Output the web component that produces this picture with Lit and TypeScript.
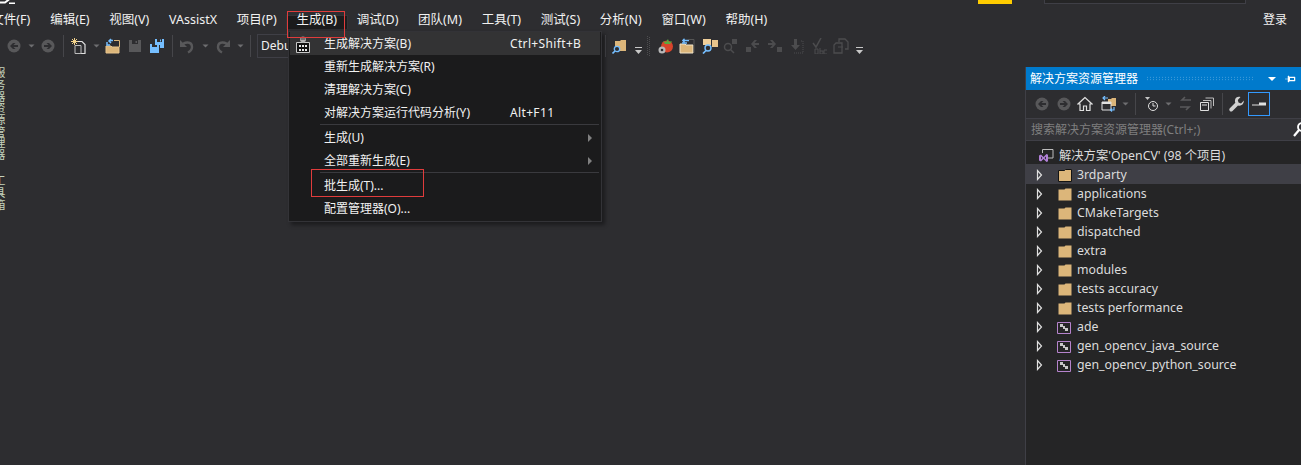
import { LitElement, html, css, svg } from "lit";
import { customElement } from "lit/decorators.js";

const D = "#58585a";
const TAN = "#dcb67a";
const BL = "#75beff";
const W = "#e0e0e0";
const ic = (body: unknown, w = 16, h = 16) =>
  html`<svg width=${w} height=${h} viewBox="0 0 ${w} ${h}">${body}</svg>`;

const back = ic(svg`<circle cx="8" cy="8" r="6.5" fill=${D}/><path d="M12 7H7.500l2-2H7L4 8l3 3h2.500l-2-2H12z" fill="#2d2d30"/>`);
const fwd = ic(svg`<circle cx="8" cy="8" r="6.500" fill=${D}/><path d="M4 7h4.500l-2-2H9l3 3-3 3H6.500l2-2H4z" fill="#2d2d30"/>`);
const dd = ic(svg`<path d="M1.500 2.500h6l-3 3z" fill="#6e6e70"/>`, 9, 8);
const ddLine = html`<span class="low">${ic(svg`<path d="M1 1h7v1H1z" fill="#c8c8c8"/><path d="M1 4h7L4.500 8z" fill="#c8c8c8"/>`, 9, 9)}</span>`;
const newProj = ic(svg`<path d="M7 3.500h4l3 3v9H6" fill="none" stroke=${W} stroke-width="1.200"/><path d="M4 7.500h6v8H4z" fill="none" stroke="#bdbdbd" stroke-width="1"/><path d="M3.500 0v7M0 3.500h7M1 1l5 5M6 1L1 6" stroke="#f2d28b" stroke-width="1"/>`);
const folderOpen = ic(svg`<path d="M1 8h5l1 1h7v6H1z" fill=${TAN} stroke="#e8c48c" stroke-width="1"/><path d="M8 2.500H4.500M6 1 4 3l2 2M2 4v3h3" fill="none" stroke=${BL} stroke-width="1.500"/><path d="M9 2.500h5.500V9" fill="none" stroke=${TAN} stroke-width="1"/>`);
const save = ic(svg`<path d="M2 2h12v12H2z" fill=${D}/><path d="M5 2h6v4H5z" fill="#2d2d30"/><path d="M8.500 3H10v2H8.500z" fill=${D}/>`);
const saveAll = ic(svg`<path d="M1 6h9v9H1z" fill=${BL}/><path d="M3 6h5v3H3z" fill="#2d2d30"/><path d="M6 7V1h9v9h-4V7z" fill=${BL}/><path d="M8 1h5v3H8z" fill="#2d2d30"/><path d="M11 1.500h1v2h-1z" fill=${BL}/>`, 17, 16);
const undo = ic(svg`<path d="M3 7.500C5 3.500 13 3 13 9c0 3-2 4.500-4 5.500" fill="none" stroke=${D} stroke-width="2.400"/><path d="M1 2v7h7z" fill=${D}/>`);
const redo = ic(svg`<path d="M13 7.500C11 3.500 3 3 3 9c0 3 2 4.500 4 5.500" fill="none" stroke=${D} stroke-width="2.400"/><path d="M15 2v7H8z" fill=${D}/>`);

const folderFind = ic(svg`<path d="M3 3h5l1-1h5v11H3z" fill=${TAN}/><circle cx="5" cy="11" r="2.700" fill="#2d2d30" stroke=${BL} stroke-width="1.300"/><path d="M3 13 .500 15.500" stroke=${BL} stroke-width="1.600"/>`);
const tomato = ic(svg`<circle cx="10" cy="8.500" r="6" fill="#d9442b"/><path d="M6 3l3 1 2-3 1 3 3-1-2 3H8z" fill="#5ba83f"/><circle cx="5" cy="12" r="3.500" fill="#b8b8b8"/><circle cx="5" cy="12" r="1.300" fill="#2d2d30"/>`);
const folderRefresh = ic(svg`<path d="M1 6h5l1 1h7v8H1z" fill=${TAN} stroke="#f1e4c9" stroke-width="1"/><path d="M10 2.500H4M5.500 .8 3.800 2.500l1.700 1.700M3 5h5" fill="none" stroke=${BL} stroke-width="1.300"/><path d="M9 1.500h6v13" fill="none" stroke="#555" stroke-width="1"/>`);
const twoFind = ic(svg`<path d="M1 1h8v6H1z" fill="#f0cf9a"/><path d="M10 2h6v7h-6z" fill="#e8c48c"/><circle cx="6" cy="10" r="3" fill="#2d2d30" stroke=${BL} stroke-width="1.400"/><path d="M4 12.500 1 15.500" stroke=${BL} stroke-width="1.700"/>`);
const findDim = ic(svg`<circle cx="6" cy="9" r="3.500" fill="none" stroke="#4c4c4e" stroke-width="1.500"/><path d="M8.500 11.500 12 15" stroke="#4c4c4e" stroke-width="1.500"/><path d="M10 1h5v5h-5z" fill="#4c4c4e"/>`);
const prevDim = ic(svg`<path d="M1 9h5v5H1z" fill="#4c4c4e"/><path d="M14 5H9.500L12 2H9.500L6 6l3.500 4H12L9.500 7H14z" fill="#4c4c4e"/>`);
const nextDim = ic(svg`<path d="M10 9h5v5h-5z" fill="#4c4c4e"/><path d="M1 5h4.500L3 2h2.500L9 6l-3.500 4H3l2.500-3H1z" fill="#4c4c4e"/>`);
const inDim = ic(svg`<path d="M5 1v6H2l4.500 5L11 7H8V1z" fill="#4c4c4e"/><path d="M12 3h2v12H4" fill="none" stroke="#4c4c4e" stroke-dasharray="1 1"/>`);
const checkDim = ic(svg`<path d="M1 5l3 4 5-9" fill="none" stroke="#4c4c4e" stroke-width="1.500"/><path d="M3 11h3v5H3zM8 10v6h3v-3H8M15 12h-3v4h3" fill="none" stroke="#4c4c4e" stroke-width="1"/>`);
const pagesDim = ic(svg`<path d="M3 5h6v10H1V7z" fill="none" stroke="#4c4c4e" stroke-width="1.300"/><path d="M6 4V1h6l3 3v7h-3" fill="none" stroke="#4c4c4e" stroke-width="1.300"/><path d="M5 9h5" stroke="#4c4c4e"/>`);
const dots = ic(svg`<path d="M1.500 1v20M3.500 2v20" fill="none" stroke="#4d4d4f" stroke-dasharray="1 1"/>`, 5, 22);

const home = ic(svg`<path d="M8 1.500 1 8h2v6.500h3.500V10h3v4.500H13V8h2z" fill="#2d2d30" stroke=${W} stroke-width="1.200"/>`);
const syncFolder = ic(svg`<path d="M8 3h3l1-1h4v8H8z" fill=${TAN}/><path d="M2 6h9v8H2z" fill="#2d2d30" stroke=${W}/><path d="M2 6h9v2H2z" fill=${W}/><path d="M3 2h5M5 0 3 2l2 2" fill="none" stroke=${BL} stroke-width="1.200"/><path d="M14 11v3h-3M12 12.500 10.500 14l1.500 1.500" fill="none" stroke=${BL} stroke-width="1.200"/>`, 17, 16);
const clock = ic(svg`<circle cx="9" cy="10" r="4.500" fill="none" stroke=${W} stroke-width="1"/><path d="M9 7v3h2.500" fill="none" stroke=${W}/><path d="M1 1h5L3.500 4z" fill="#c8c8c8"/>`);
const syncDim = ic(svg`<path d="M14 4H5l3-3M3 11h9l-3 3" fill="none" stroke="#5a5a5c" stroke-width="1.600"/>`);
const copies = ic(svg`<path d="M1.500 6.500h8v8h-8z" fill="none" stroke=${W}/><path d="M3 9h5" stroke=${W}/><path d="M4 4.500h8v8M6.500 2h8v8" fill="none" stroke="#bdbdbd"/>`);
const wrench = ic(svg`<path d="M15 4.500 12 7.500 9.500 6.500 8.800 4 11.500 1.100C9 .2 6.500 1.500 6 4c-.2 1 0 2 .3 2.700L.8 12.300c-.8 1-.6 2 0 2.700.8.800 1.900.8 2.700 0l5.500-5.600c2.500 1 5.800-.6 6-4.900z" fill="#d0d0d0"/>`);
const pinDash = ic(svg`<path d="M1 9h14" fill="none" stroke=${W} stroke-width="1"/><path d="M8 6.500h7V9H8z" fill=${W}/>`);

const menuItems = ["编辑(E)", "视图(V)", "VAssistX", "项目(P)"];
const menuItems2 = ["调试(D)", "团队(M)", "工具(T)", "测试(S)", "分析(N)", "窗口(W)", "帮助(H)"];

/* Tool rows: each entry is the x at which the icon starts; widths follow from the next entry. */
type Tool = [number, unknown];
const SEP = "sep";
const leftTools: Tool[] = [
  [6, back], [27, dd], [40, fwd], [63, SEP], [71, newProj], [92, dd], [105, folderOpen], [127, save], [149, saveAll],
  [172, SEP], [179, undo], [201, dd], [215, redo], [236, dd], [250, SEP], [257, ""],
];
const rightTools: Tool[] = [
  [605, SEP], [612, folderFind], [634, ddLine], [646, dots], [657, tomato], [679, folderRefresh], [702, twoFind], [722, findDim],
  [745, prevDim], [767, nextDim], [789, inDim], [812, checkDim], [833, pagesDim], [855, ddLine], [866, ""],
];
const panelTools: Tool[] = [
  [1034, back], [1056, fwd], [1077, home], [1100, syncFolder], [1121, dd], [1135, SEP], [1144, clock], [1164, dd],
  [1177, syncDim], [1199, copies], [1222, SEP], [1229, wrench], [1248, ""],
];

const folderIcon = (sel = false) =>
  ic(svg`<path d="M1.500 3.500h6l1-1h6V14.500h-13z" fill=${TAN} stroke=${sel ? "#141414" : "none"}/>`, 16, 16);
const projIcon = ic(svg`<path d="M.5 3.500h13v11H.5z" fill="#252526" stroke="#b583cc"/><path d="M3 5h3v2h2v2h3v3H8v-2H6V8H3z" fill="#c8c8c8"/>`, 14, 16);
const slnIcon = ic(svg`<path d="M3.500 4V.5h10.500v8.500H9" fill="none" stroke="#bdbdbd"/><path d="M0 6.500 2 5.500l2.500 2.500L7.500 5l1.500.800v6.400l-1.500.800L4.500 10 2 12.500 0 11.500z" fill="#b180d7"/><path d="M2 7.500v3l1.300-1.500zM7 7.500 5.500 9 7 10.500z" fill="#252526"/>`, 15, 13);
const triangle = ic(svg`<path d="M2.500 1.500v9l4-4.500z" fill="none" stroke="#e0e0e0" stroke-width="1.200"/>`, 8, 12);
const buildIcon = ic(svg`<path d="M.5 6.500h13v10H.5z" fill="#111" stroke="#c8c8c8"/><path d="M3 9h2v2H3zM6 9h2v2H6zM9 9h2v2H9zM3 13h2v2H3zM6 13h2v2H6zM9 13h2v2H9z" fill="#e8e8e8"/><circle cx="7" cy="3.500" r="3" fill="#9a9a9a"/><path d="M5 1h4v3H5z" fill="#707070"/><path d="M4 4h6L7 7z" fill="#b0b0b0"/>`, 14, 17);

const tree: string[] = ["applications", "CMakeTargets", "dispatched", "extra", "modules", "tests accuracy", "tests performance"];
const projects = ["ade", "gen_opencv_java_source", "gen_opencv_python_source"];

@customElement("app-root")
export class AppRoot extends LitElement {
  static styles = css`
    :host {
      display: block;
      width: 1301px;
      height: 465px;
      overflow: hidden;
      position: relative;
      background: #2d2d30;
      color: #f1f1f1;
      font: 12px/16px "Noto Sans", "Noto Sans CJK SC", sans-serif;
    }
    svg { display: block; flex: none; }
    .title { height: 8px; display: flex; align-items: flex-start; }
    .logo { width: 15px; height: 4px; margin-right: 963px; }
    .yellow { width: 34px; height: 4px; background: #ffcc00; margin-right: 32px; }
    .tsearch { width: 200px; height: 3px; background: #252526; border: 1px solid #3f3f46; border-top: 0; }

    .menubar { height: 23px; display: flex; align-items: center; font-size: 12.5px; }
    .mi { padding: 0 9.850px; white-space: nowrap; flex: none; }
    .mi.first { width: 40.300px; box-sizing: border-box; padding: 0 10px 0 0; display: flex; justify-content: flex-end; overflow: hidden; }
    .mi.active { position: relative; z-index: 3; }
    .mi.active::before {
      content: ""; position: absolute; left: -1px; right: -1px; top: 3px; bottom: -1px;
      background: #1b1b1c; border: 1px solid #333337; border-bottom: 0; z-index: -1;
    }
    .grow { flex: 1; }
    .login { margin-right: 14px; font-size: 12px; }

    .toolbar { height: 29px; display: flex; align-items: center; padding-left: 6px; }
    .slot { display: flex; align-items: center; flex: none; height: 22px; }
    .low { display: block; margin-top: 9px; }
    .sep { width: 1px; height: 22px; background: #46464a; }
    .combo {
      width: 71px; height: 24px; box-sizing: border-box; flex: none; margin-right: 277px;
      border: 1px solid #3f3f46; padding: 3px; overflow: hidden; color: #f1f1f1; white-space: nowrap;
    }

    .body { height: 405px; display: flex; }
    .strip {
      width: 6px; overflow: hidden; flex: none; color: #c4d2bc; padding-top: 7px;
      display: flex; flex-direction: column;
    }
    .vtext { writing-mode: vertical-rl; margin-left: -7px; font-size: 11.700px; line-height: 14px; white-space: nowrap; }
    .vtext + .vtext { margin-top: 14px; }
    .main { flex: 1; }

    .panel {
      width: 276px; flex: none; margin-top: 7px; box-sizing: border-box;
      border-left: 1px solid #3f3f46; background: #252526; display: flex; flex-direction: column;
    }
    .ptitle {
      height: 23px; background: #007acc; display: flex; align-items: center; padding: 0 5px 0 4px; gap: 8px; color: #fff;
    }
    .pdots {
      flex: 1; height: 5px; margin-right: 4px;
      background-image: radial-gradient(#4fa3dc 0.6px, transparent 0.7px);
      background-size: 3px 2.500px;
    }
    .ptool { height: 28px; display: flex; align-items: center; background: #2d2d30; padding-left: 8px; }
    .active-tool {
      width: 22px; height: 24px; box-sizing: border-box; border: 1px solid #3399ff;
      display: flex; align-items: center; justify-content: center;
    }
    .psearch {
      height: 23px; background: #333337; color: #7f7f7f; display: flex; align-items: center;
      padding-left: 5px; position: relative; overflow: hidden; border-top: 1px solid #3f3f46; border-bottom: 1px solid #3f3f46; box-sizing: border-box;
    }
    .psearch svg { position: absolute; right: -7px; top: 3px; }
    .tree { padding-top: 5px; color: #dcdcdc; font-size: 12.3px; }
    .row { height: 19px; display: flex; align-items: center; padding-left: 9px; white-space: nowrap; }
    .row .ti { width: 22px; display: flex; }
    .row .fi { width: 20px; display: flex; }
    .root { padding-left: 13px; gap: 5px; }
    .row.sel { background: #3f3f46; box-shadow: 0 -1px 0 #3f3f46; }

    .drop {
      position: absolute; left: 288px; top: 31px; width: 314px; height: 191px; box-sizing: border-box;
      background: #1b1b1c; border: 1px solid #333337; padding: 0 1px 2px; z-index: 2;
      box-shadow: 3px 3px 4px rgba(0, 0, 0, 0.4);
    }
    .dr { height: 23px; display: flex; align-items: center; padding-left: 34px; position: relative; white-space: nowrap; }
    .dr.hi { background: #333334; }
    .dr .k { position: absolute; left: 220px; letter-spacing: 0.35px; }
    .dr .ico { position: absolute; left: 6px; top: 4px; }
    .dr .arr { position: absolute; right: 8px; top: 8px; width: 0; height: 0; border-left: 4px solid #808080; border-top: 4px solid transparent; border-bottom: 4px solid transparent; }
    .ds { height: 2px; position: relative; }
    .ds::after { content: ""; position: absolute; left: 30px; right: 1px; top: 0; height: 1px; background: #3a3a3e; }
    .red { position: absolute; border: 1px solid #e03c3c; box-sizing: border-box; z-index: 4; }
    .r1 { left: 287px; top: 11px; width: 58px; height: 27px; }
    .r2 { left: 311px; top: 169px; width: 113px; height: 28px; }
  `;

  private tools(list: Tool[]) {
    return list.slice(0, -1).map(([x, c], i) => {
      const w = list[i + 1][0] - x;
      return html`<span class="slot" style="width:${w}px">${c === SEP ? html`<span class="sep"></span>` : c}</span>`;
    });
  }

  render() {
    return html`
      <div class="title">
        <div class="logo">${ic(svg`<path d="M0 2.500h5l4-3M9 3.500h6" fill="none" stroke="#fff" stroke-width="2"/>`, 15, 4)}</div>
        <div class="yellow"></div>
        <div class="tsearch"></div>
      </div>
      <div class="menubar">
        <span class="mi first">文件(F)</span>
        ${menuItems.map((m) => html`<span class="mi">${m}</span>`)}
        <span class="mi active">生成(B)</span>
        ${menuItems2.map((m) => html`<span class="mi">${m}</span>`)}
        <span class="grow"></span>
        <span class="login">登录</span>
      </div>
      <div class="toolbar">
        ${this.tools(leftTools)}
        <div class="combo">Debug</div>
        ${this.tools(rightTools)}
      </div>
      <div class="body">
        <div class="strip">
          <span class="vtext">服务器资源管理器</span>
          <span class="vtext">工具箱</span>
        </div>
        <div class="main"></div>
        <div class="panel">
          <div class="ptitle">
            <span>解决方案资源管理器</span>
            <span class="pdots"></span>
            ${ic(svg`<path d="M1 2h8L5 6z" fill="#fff"/>`, 10, 8)}
            ${ic(svg`<path d="M0 5h3M3 2v6h1V7h6V3H4V2z" fill="#fff" stroke="#fff" stroke-width=".5"/><path d="M5 4h4v2H5z" fill="#007acc"/>`, 11, 10)}
          </div>
          <div class="ptool">
            ${this.tools(panelTools)}
            <span class="active-tool">${pinDash}</span>
          </div>
          <div class="psearch">
            <span>搜索解决方案资源管理器(Ctrl+;)</span>
            ${ic(svg`<circle cx="10" cy="5" r="4" fill="none" stroke="#fff" stroke-width="1.800"/><path d="M7 8 2 14" stroke="#fff" stroke-width="2.200"/>`)}
          </div>
          <div class="tree">
            <div class="row root">${slnIcon}<span>解决方案'OpenCV' (98 个项目)</span></div>
            <div class="row sel"><span class="ti">${triangle}</span><span class="fi">${folderIcon(true)}</span><span>3rdparty</span></div>
            ${tree.map((t) => html`<div class="row"><span class="ti">${triangle}</span><span class="fi">${folderIcon()}</span><span>${t}</span></div>`)}
            ${projects.map((t) => html`<div class="row"><span class="ti">${triangle}</span><span class="fi">${projIcon}</span><span>${t}</span></div>`)}
          </div>
        </div>
      </div>

      <div class="drop">
        <div class="dr hi"><span class="ico">${buildIcon}</span>生成解决方案(B)<span class="k">Ctrl+Shift+B</span></div>
        <div class="dr">重新生成解决方案(R)</div>
        <div class="dr">清理解决方案(C)</div>
        <div class="dr">对解决方案运行代码分析(Y)<span class="k">Alt+F11</span></div>
        <div class="ds"></div>
        <div class="dr">生成(U)<span class="arr"></span></div>
        <div class="dr">全部重新生成(E)<span class="arr"></span></div>
        <div class="ds"></div>
        <div class="dr">批生成(T)...</div>
        <div class="dr">配置管理器(O)...</div>
      </div>
      <div class="red r1"></div>
      <div class="red r2"></div>
    `;
  }
}
